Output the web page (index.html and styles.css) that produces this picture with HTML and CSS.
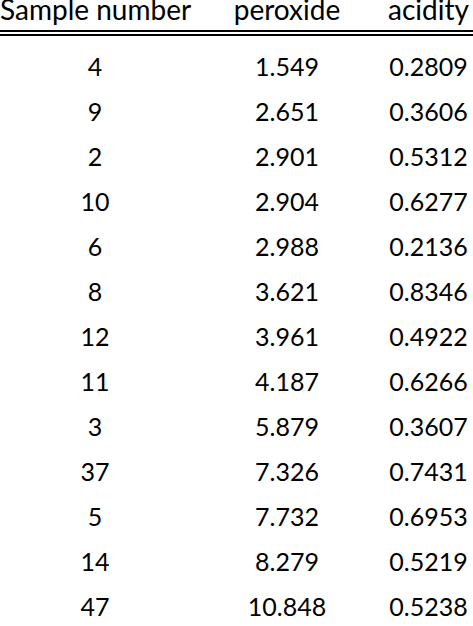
FILE: index.html
```html
<!DOCTYPE html>
<html>
<head>
<meta charset="utf-8">
<link rel="stylesheet" href="styles.css">
</head>
<body>
<div class="sheet">
  <div class="row head">
    <div class="cell">Sample number</div>
    <div class="cell">peroxide</div>
    <div class="cell">acidity</div>
  </div>
  <div class="body">
    <div class="row"><div class="cell">4</div><div class="cell">1.549</div><div class="cell">0.2809</div></div>
    <div class="row"><div class="cell">9</div><div class="cell">2.651</div><div class="cell">0.3606</div></div>
    <div class="row"><div class="cell">2</div><div class="cell">2.901</div><div class="cell">0.5312</div></div>
    <div class="row"><div class="cell">10</div><div class="cell">2.904</div><div class="cell">0.6277</div></div>
    <div class="row"><div class="cell">6</div><div class="cell">2.988</div><div class="cell">0.2136</div></div>
    <div class="row"><div class="cell">8</div><div class="cell">3.621</div><div class="cell">0.8346</div></div>
    <div class="row"><div class="cell">12</div><div class="cell">3.961</div><div class="cell">0.4922</div></div>
    <div class="row"><div class="cell">11</div><div class="cell">4.187</div><div class="cell">0.6266</div></div>
    <div class="row"><div class="cell">3</div><div class="cell">5.879</div><div class="cell">0.3607</div></div>
    <div class="row"><div class="cell">37</div><div class="cell">7.326</div><div class="cell">0.7431</div></div>
    <div class="row"><div class="cell">5</div><div class="cell">7.732</div><div class="cell">0.6953</div></div>
    <div class="row"><div class="cell">14</div><div class="cell">8.279</div><div class="cell">0.5219</div></div>
    <div class="row"><div class="cell">47</div><div class="cell">10.848</div><div class="cell">0.5238</div></div>
  </div>
</div>
</body>
</html>
```
FILE: styles.css
```css
html, body {
  margin: 0;
  padding: 0;
  background: #ffffff;
}
body {
  font-family: Lato, "Open Sans", sans-serif;
  font-size: 25px;
  color: #000000;
  overflow: hidden;
}
.sheet {
  width: 473px;
}
.row {
  display: grid;
  grid-template-columns: 190px 194px 89px;
  height: 45px;
  line-height: 45px;
  white-space: nowrap;
}
.cell {
  text-align: center;
}
.head {
  font-size: 28px;
  height: 18px;
  line-height: 18px;
  padding-bottom: 12px;
  border-bottom: 6px double #000000;
}
.body {
  padding-top: 8px;
}
```
